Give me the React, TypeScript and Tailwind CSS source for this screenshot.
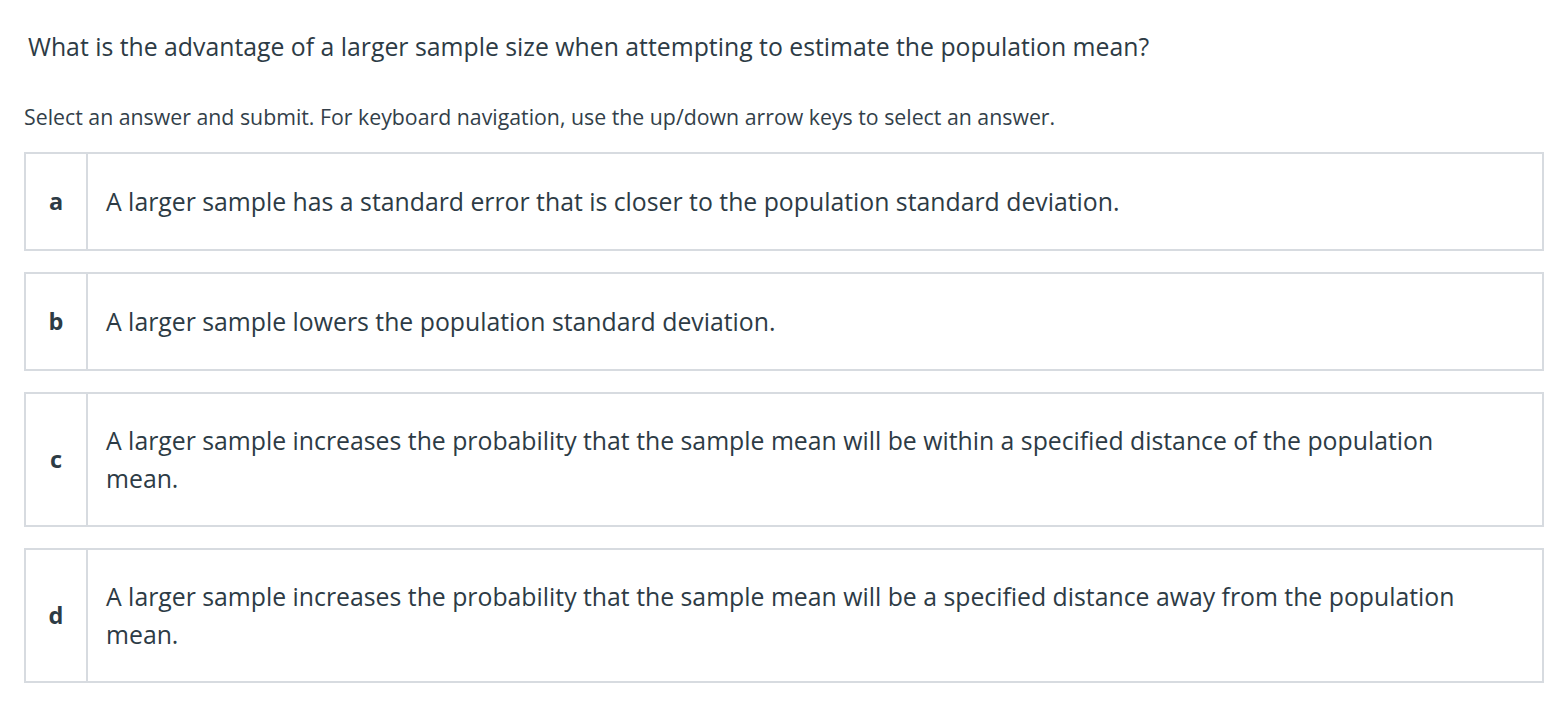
import React from "react";

const options = [
  { k: "a", t: "A larger sample has a standard error that is closer to the population standard deviation." },
  { k: "b", t: "A larger sample lowers the population standard deviation." },
  { k: "c", t: "A larger sample increases the probability that the sample mean will be within a specified distance of the population mean." },
  { k: "d", t: "A larger sample increases the probability that the sample mean will be a specified distance away from the population mean." },
];

export default function App() {
  return (
    <div className="min-h-screen bg-white text-[#2d3b45]" style={{ fontFamily: "'Open Sans', 'Noto Sans', sans-serif" }}>
      <div className="pl-[24px] pr-[20px] pt-[28px]">
        <h1 className="pl-[4px] text-[24.8px] leading-[36px] font-normal">
          What is the advantage of a larger sample size when attempting to estimate the population mean?
        </h1>
        <p className="mt-[39px] text-[21.3px] leading-[28px] text-[#333f4a]">
          Select an answer and submit. For keyboard navigation, use the up/down arrow keys to select an answer.
        </p>
        <div className="mt-[21px] flex flex-col gap-[21px]">
          {options.map((o) => (
            <div key={o.k} className="flex border-2 border-[#d7dbe0] bg-white">
              <div className="w-[62px] shrink-0 flex items-center justify-center border-r-2 border-[#d7dbe0] text-[23.5px] font-bold">
                {o.k}
              </div>
              <div className="flex-1 flex items-center min-h-[95px] py-[28px] pl-[18px] pr-[60px] text-[24.8px] leading-[37.5px]">
                {o.t}
              </div>
            </div>
          ))}
        </div>
      </div>
    </div>
  );
}
